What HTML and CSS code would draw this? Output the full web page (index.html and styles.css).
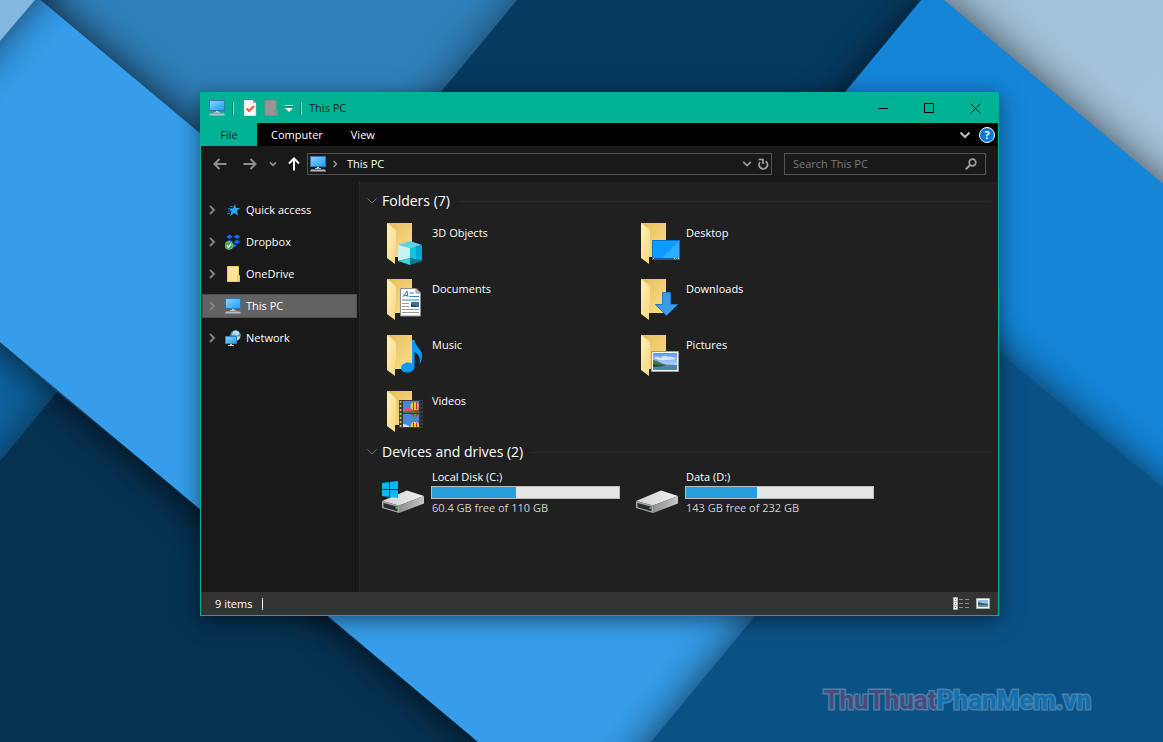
FILE: index.html
```html
<!DOCTYPE html>
<html lang="en">
<head>
  <meta charset="UTF-8" />
  <meta name="viewport" content="width=device-width, initial-scale=1.0" />
  <title>This PC</title>
  <link rel="stylesheet" href="styles.css">
</head>
<body>
  <!-- wallpaper -->
  <svg class="wallpaper" viewBox="0 0 1163 742" preserveAspectRatio="xMidYMid slice" aria-hidden="true">
    <defs>
      <filter id="soft" x="-20%" y="-20%" width="140%" height="140%"><feGaussianBlur stdDeviation="20" /></filter>
      <linearGradient id="lightCorner" x1="0" y1="0" x2="1" y2="1"><stop offset="0" stop-color="#9fbfd6" /><stop offset="1" stop-color="#a9c6de" /></linearGradient>
    </defs>
    <rect width="1163" height="742" fill="#2f80ba" />
    <path d="M575 -70L100 504H1163V-70z" fill="#000" opacity=".5" filter="url(#soft)" />
    <path d="M517 0L100 504H1163V0z" fill="#063a60" />
    <path d="M860 -70H1300V320H1200z" fill="url(#lightCorner)" />
    <path d="M932 -10L500 510L1300 1180V300z" fill="#000" opacity=".65" filter="url(#soft)" />
    <path d="M921 0L500 510L1163 1060V184L944 0z" fill="#1485d7" />
    <path d="M-60 292L0 342L57 392L-60 533z" fill="#0e629e" />
    <path d="M57 392L-60 533V900H700L400 670z" fill="#000" opacity=".5" filter="url(#soft)" />
    <path d="M57 392L0 461V742H700L400 670z" fill="#063151" />
    <path d="M-60 -85L800 636V1010L-60 292z" fill="#000" opacity=".78" filter="url(#soft)" />
    <path d="M0 -34L880 702L760 978L0 342z" fill="#359de9" />
    <path d="M-60 113L92 -68H-60z" fill="#000" opacity=".6" filter="url(#soft)" />
    <path d="M0 0H35L0 41z" fill="#82b7df" />
    <path d="M940 304L1263 572V862H551L872 475z" fill="#000" opacity=".65" filter="url(#soft)" />
    <path d="M920 287L1163 488V742H651L880 465z" fill="#0a5286" />
  </svg>

  <!-- shared icons -->
  <svg class="sprite" aria-hidden="true">
    <defs>
      <linearGradient id="screen" x1="0" y1="0" x2="1" y2="1"><stop offset="0" stop-color="#8cd3ff" /><stop offset="1" stop-color="#1b9df5" /></linearGradient>
      <linearGradient id="folderBack" x1="0" y1="0" x2="1" y2="1"><stop offset="0" stop-color="#e8bd5b" /><stop offset="1" stop-color="#fbe08c" /></linearGradient>
      <linearGradient id="folderFlap" x1="0" y1="0" x2="1" y2="1"><stop offset="0" stop-color="#fff0bd" /><stop offset="1" stop-color="#f8d880" /></linearGradient>
      <linearGradient id="driveTop" x1="0" y1="0" x2="1" y2="0"><stop offset="0" stop-color="#d2d2d2" /><stop offset="1" stop-color="#efeff0" /></linearGradient>
      <linearGradient id="driveSide" x1="0" y1="0" x2="1" y2="0"><stop offset="0" stop-color="#8f8f8f" /><stop offset="1" stop-color="#c6c6c6" /></linearGradient>
      <linearGradient id="sky" x1="0" y1="0" x2="0" y2="1"><stop offset="0" stop-color="#5b97ee" /><stop offset="1" stop-color="#dceefc" /></linearGradient>
    </defs>
    <symbol id="pc" viewBox="0 0 16 16">
      <rect x=".5" y=".5" width="15" height="10" fill="url(#screen)" stroke="#2f78b0" />
      <path d="M7 11h2v1.500H7z" fill="#e3eef5" />
      <path d="M5 12h6v1H5z" fill="#a9bac6" />
      <path d="M1 13.500h14l1 2H0z" fill="#b3bfd0" />
    </symbol>
    <symbol id="folder" viewBox="0 0 48 48">
      <path d="M7 3h25v20l2 2v12H9z" fill="url(#folderBack)" />
      <path d="M7 3l9 7v18l-1 2v14L7 38z" fill="url(#folderFlap)" />
    </symbol>
    <symbol id="drive" viewBox="0 0 48 48">
      <path d="M2 32L27 21.500 44 27 19 36.500z" fill="url(#driveTop)" />
      <path d="M19 36.500L44 27v7.500L19 44z" fill="url(#driveSide)" />
      <path d="M2 32l17 4.500V44L2 39z" fill="#a5a5a5" />
      <path d="M3.500 34l14 3.700v4.600L3.500 38.300z" fill="#2b2b2b" />
      <path d="M15.500 38h2v2h-2z" fill="#35d04a" />
    </symbol>
    <symbol id="arrow-right" viewBox="0 0 8 10"><path d="M2 1l4 4-4 4" fill="none" stroke="currentColor" stroke-width="1.800" /></symbol>
    <symbol id="arrow-down" viewBox="0 0 12 8"><path d="M1.500 1.500L6 6l4.500-4.500" fill="none" stroke="currentColor" stroke-width="2" /></symbol>
    <symbol id="landscape" viewBox="0 0 28 21">
      <path d="M.5.500h27v20H.5z" fill="#fff" stroke="#9b9b9b" />
      <path d="M2 2h24v17H2z" fill="url(#sky)" />
      <path d="M3 7q3-3 6 0 5-4 8-1 5-1 8 2-5 1-10 1-7 1-12-2z" fill="#eaf4ff" opacity=".8" />
      <path d="M2 9q4 0 7 2.500t17 2.500v1H2z" fill="#3f7a52" />
      <path d="M2 14h24v5H2z" fill="#4f85a6" />
      <path d="M2 13q8 1 13 2l-13 1z" fill="#235038" />
    </symbol>
  </svg>

  <main class="window">
    <header class="titlebar">
      <div class="quick-bar">
        <svg class="icon-16" aria-hidden="true"><use href="#pc" /></svg>
        <span class="divider"></span>
        <button aria-label="Properties"><svg width="14" height="16" viewBox="0 0 14 16">
          <path d="M1 0h9l3 3v13H1z" fill="#fafafa" stroke="#9aa" stroke-width=".5" />
          <path d="M10 0v3h3z" fill="#9a9a9a" />
          <path d="M3.500 8.500L6 11l5-5" fill="none" stroke="#f0562b" stroke-width="1.800" />
        </svg></button>
        <button aria-label="New folder"><svg width="14" height="16" viewBox="0 0 14 16">
          <path d="M1 .5h11v10h1V15.500H1z" fill="#979797" stroke="#898989" />
          <path d="M11 10.500v5" stroke="#858585" />
        </svg></button>
        <button aria-label="Customize"><svg width="8" height="7" viewBox="0 0 8 7">
          <path d="M0 0h8v1H0zM0 3h8L4 7z" fill="#fff" />
          <path d="M0 1h8v1H0z" fill="#067a67" />
        </svg></button>
        <span class="divider"></span>
      </div>
      <h1>This PC</h1>
      <div class="controls">
        <button aria-label="Minimize"><svg width="11" height="11" viewBox="0 0 11 11"><path d="M0 5.500h10" stroke="#000" /></svg></button>
        <button aria-label="Maximize"><svg width="11" height="11" viewBox="0 0 11 11"><path d="M.5.500h9v9h-9z" fill="none" stroke="#000" /></svg></button>
        <button aria-label="Close"><svg width="11" height="11" viewBox="0 0 11 11"><path d="M.5.500l10 10M10.500.500l-10 10" stroke="#000" /></svg></button>
      </div>
    </header>

    <div class="ribbon">
      <button class="tab active">File</button>
      <button class="tab">Computer</button>
      <button class="tab">View</button>
      <div class="ribbon-tools">
        <button aria-label="Expand ribbon"><svg width="12" height="8"><use href="#arrow-down" /></svg></button>
        <button class="help" aria-label="Help">?</button>
      </div>
    </div>

    <div class="navbar">
      <div class="history">
        <button aria-label="Back"><svg width="14" height="12" viewBox="0 0 14 12"><path d="M13.500 6H2M6.500 1L1.500 6l5 5" fill="none" stroke="currentColor" stroke-width="2" /></svg></button>
        <button aria-label="Forward"><svg width="14" height="12" viewBox="0 0 14 12"><path d="M.5 6H12M7.500 1l5 5-5 5" fill="none" stroke="currentColor" stroke-width="2" /></svg></button>
        <button class="recent" aria-label="Recent locations"><svg width="8" height="6" viewBox="0 0 12 8"><path d="M1.500 1.500L6 6l4.500-4.500" fill="none" stroke="currentColor" stroke-width="2.500" /></svg></button>
        <button class="up" aria-label="Up"><svg width="12" height="14" viewBox="0 0 12 14"><path d="M6 13.500V2M1 6.500l5-5 5 5" fill="none" stroke="currentColor" stroke-width="2" /></svg></button>
      </div>
      <div class="address">
        <svg class="icon-16" aria-hidden="true"><use href="#pc" /></svg>
        <svg class="crumb" width="6" height="8" aria-hidden="true"><use href="#arrow-right" /></svg>
        <a href="#">This PC</a>
        <button aria-label="Previous locations"><svg width="10" height="8"><use href="#arrow-down" /></svg></button>
        <button aria-label="Refresh"><svg width="12" height="12" viewBox="0 0 12 12">
          <path d="M8.700 3.200A4.200 4.200 0 1 1 3 4" fill="none" stroke="currentColor" stroke-width="1.700" />
          <path d="M1.500 1.500h4.500v4.500" fill="none" stroke="currentColor" stroke-width="1.700" />
        </svg></button>
      </div>
      <form class="search">
        <input type="text" placeholder="Search This PC" aria-label="Search This PC" />
        <button type="button" aria-label="Search"><svg width="12" height="12" viewBox="0 0 12 12">
          <circle cx="7.500" cy="4.500" r="3.300" fill="none" stroke="currentColor" stroke-width="1.700" />
          <path d="M5 7L.8 11.200" stroke="currentColor" stroke-width="2" />
        </svg></button>
      </form>
    </div>

    <div class="panes">
      <nav class="sidebar">
        <a href="#"><svg class="chev" width="8" height="10"><use href="#arrow-right" /></svg>
          <svg class="icon-16" viewBox="0 0 16 16">
            <path d="M10 2l1 4h4l-3 2.800L13 13.500 9.300 11 5 14l1.500-4.700L4 6.500h4z" fill="#2aa5f2" />
            <path d="M5 4.500h3M3 9h3M2 11.500h3M3 6.500h2" stroke="#1480c4" />
          </svg>Quick access</a>
        <a href="#"><svg class="chev" width="8" height="10"><use href="#arrow-right" /></svg>
          <svg class="icon-16" viewBox="0 0 16 16">
            <path d="M4.500 .5L8 2.700 4.500 5 1 2.700zM12 .5l3.500 2.200L12 5 8.500 2.700zM4.500 5.800L8 8 4.500 10 1 8zM12 5.800L15.500 8 12 10 8.500 8zM8.500 9.500l3.500 2-3.500 2.300L5 11.500z" fill="#0a6cff" />
            <circle cx="4" cy="11.500" r="4" fill="#46a845" stroke="#9bd694" stroke-width=".6" />
            <path d="M2 11.500l1.500 1.700L6 9.800" fill="none" stroke="#fff" stroke-width="1.300" />
          </svg>Dropbox</a>
        <a href="#"><svg class="chev" width="8" height="10"><use href="#arrow-right" /></svg>
          <svg class="icon-16" viewBox="0 0 16 16">
            <path d="M2.500 .5h11v9h1v6h-12z" fill="#ffe495" stroke="#f2c95d" />
            <path d="M12.500 9.500v6" stroke="#e8bd4f" />
          </svg>OneDrive</a>
        <a href="#" class="selected"><svg class="chev" width="8" height="10"><use href="#arrow-right" /></svg>
          <svg class="icon-16"><use href="#pc" /></svg>This PC</a>
        <a href="#"><svg class="chev" width="8" height="10"><use href="#arrow-right" /></svg>
          <svg class="icon-16" viewBox="0 0 16 16">
            <circle cx="10.500" cy="5.500" r="5.300" fill="#4d93b8" />
            <path d="M8 1.500q3-2 5.500 0l1 3-3 1-2.500-1-2 1zM12 7l3-1q0 3-3 4.500z" fill="#b9dfec" />
            <path d="M.5 6.500h11v7H.5z" fill="url(#screen)" stroke="#2f84bd" />
            <path d="M5 14h2v1h2v1H3v-1h2z" fill="#bccbd6" />
          </svg>Network</a>
      </nav>

      <section class="content">
        <h2><svg class="group-chev" width="10" height="6" viewBox="0 0 10 6"><path d="M.5.500L5 5 9.500.500" fill="none" stroke="currentColor" /></svg>Folders (7)</h2>
        <div class="grid">
          <div class="item">
            <svg class="icon-48" viewBox="0 0 48 48">
              <use href="#folder" />
              <path d="M18 25l12-4 12 4-12 3.500z" fill="#5fd3e6" />
              <path d="M18 25l12 3.500v9.500l-12 3z" fill="#c9f2f5" />
              <path d="M30 28.500L42 25v16l-12-3z" fill="#00a5dc" />
              <path d="M30 28.500L36 27v12.500L30 38z" fill="#18bfe0" />
              <path d="M18 41l12-3v7z" fill="#3fd4dc" />
              <path d="M30 38l12 3-12 4z" fill="#077a94" />
            </svg>
            <span class="label">3D Objects</span>
          </div>
          <div class="item">
            <svg class="icon-48" viewBox="0 0 48 48">
              <use href="#folder" />
              <path d="M18.500 20.500h27v19h-27z" fill="#0e9bff" stroke="#0874c8" />
              <path d="M28 38L45 21v17z" fill="#2eacff" />
              <path d="M19 38h26v1.500H19z" fill="#075c9d" />
              <path d="M19 38h1v1h-1zM40 38h1v1h-1zM42 38h1v1h-1zM44 38h1v1h-1z" fill="#fff" />
            </svg>
            <span class="label">Desktop</span>
          </div>
          <div class="item">
            <svg class="icon-48" viewBox="0 0 48 48">
              <use href="#folder" />
              <path d="M20.500 12.500H36l4.500 4.500v23h-20z" fill="#fff" stroke="#8e8e8e" />
              <path d="M36 12.500V17h4.500z" fill="#ccc" stroke="#8e8e8e" />
              <path d="M23 21l4-6 1 6M24 19.500h4M29.500 17H34M29.500 20.500H39M22 24h17" fill="none" stroke="#2286cc" />
              <path d="M22 27.500h7M22 30.500h7M22 33.500h17M22 36.500h17" stroke="#9b9b9b" />
              <path d="M31 26h8v5h-8z" fill="#3b71a8" /><path d="M31 28l8 3h-8z" fill="#28574a" />
            </svg>
            <span class="label">Documents</span>
          </div>
          <div class="item">
            <svg class="icon-48" viewBox="0 0 48 48">
              <use href="#folder" />
              <path d="M28.500 16.500h8v12h7.200L32.500 39.500 21.300 28.500h7.200z" fill="#3b9cec" stroke="#2478c4" />
            </svg>
            <span class="label">Downloads</span>
          </div>
          <div class="item">
            <svg class="icon-48" viewBox="0 0 48 48">
              <use href="#folder" />
              <path d="M32 8h2.500c1 7 7.500 9 7.500 16 0 4-1.500 7-2.500 8 1-6 0-9-5-12v15c0 3-3 5.500-7.500 5.500-3.500 0-6-1.500-6-4.500s3-5.500 7-5.500c1.500 0 3 .3 4 1z" fill="#0a9bfa" />
            </svg>
            <span class="label">Music</span>
          </div>
          <div class="item">
            <svg class="icon-48" viewBox="0 0 48 48">
              <use href="#folder" />
              <use href="#landscape" x="17" y="19" width="28" height="21" />
            </svg>
            <span class="label">Pictures</span>
          </div>
          <div class="item">
            <svg class="icon-48" viewBox="0 0 48 48">
              <use href="#folder" />
              <path d="M19 12h24v28H19z" fill="#3a3a3a" />
              <path d="M20.500 13v27" stroke="#d8bf74" stroke-width="1.500" stroke-dasharray="2 2" />
              <path d="M41.500 13v27" stroke="#1c1c1c" stroke-width="1.500" stroke-dasharray="2 2" />
              <path d="M23 13h16v12H23zM23 26h16v13H23z" fill="#4b86e0" />
              <path d="M23 22l4-3 4 2 8-1v5H23z" fill="#d55389" />
              <path d="M23 24l6-1 10-1v3H23z" fill="#3b7c35" />
              <circle cx="34.500" cy="18" r="4" fill="#f3c52c" />
              <path d="M33 14h1v8h-1zM36 14h1v7h-1zM33.500 22h3v2h-3z" fill="#c72f28" />
              <path d="M31.500 26h7L35 31z" fill="#d3302d" /><path d="M34 26h2v5h-2z" fill="#36a042" />
              <path d="M30.500 39q0-5 4.500-5t4 5z" fill="#f3c52c" /><path d="M33 35h1v4h-1zM36 35h1v4h-1z" fill="#c72f28" />
              <path d="M23 36l4 1 3 2h-7z" fill="#d9e6f7" />
            </svg>
            <span class="label">Videos</span>
          </div>
        </div>

        <h2><svg class="group-chev" width="10" height="6" viewBox="0 0 10 6"><path d="M.5.500L5 5 9.500.500" fill="none" stroke="currentColor" /></svg>Devices and drives (2)</h2>
        <div class="grid drives">
          <div class="item">
            <svg class="icon-48" viewBox="0 0 48 48">
              <use href="#drive" />
              <path d="M2 14l7-1v7H2zM10 13l8-1v8h-8zM2 21h7v7l-7-1zM10 21h8v8l-8-1z" fill="#00bcf2" />
            </svg>
            <div class="drive">
              <span class="label">Local Disk (C:)</span>
              <div class="bar"><div class="fill" style="width: 45%"></div></div>
              <span class="label free">60.4 GB free of 110 GB</span>
            </div>
          </div>
          <div class="item">
            <svg class="icon-48"><use href="#drive" /></svg>
            <div class="drive">
              <span class="label">Data (D:)</span>
              <div class="bar"><div class="fill" style="width: 38%"></div></div>
              <span class="label free">143 GB free of 232 GB</span>
            </div>
          </div>
        </div>
      </section>
    </div>

    <footer class="statusbar">
      <span class="count">9 items</span>
      <div class="views">
        <button aria-label="Details view"><svg width="16" height="13" viewBox="0 0 16 13">
          <path d="M.5.500h4v12h-4z" fill="#fff" stroke="#aaa" />
          <path d="M0 4.500h5M0 8.500h5" stroke="#aaa" />
          <path d="M2 2h1v1H2z" fill="#444" /><path d="M2 6h1v1H2z" fill="#2286cc" /><path d="M2 10h1v1H2z" fill="#c22" />
          <path d="M6 2.500h4M12 2.500h4M6 6.500h4M12 6.500h4M6 10.500h4M12 10.500h4" stroke="#8b8b8b" />
        </svg></button>
        <button aria-label="Large icons view"><svg width="14" height="11" viewBox="0 0 14 11">
          <path d="M.5.500h13v10H.5z" fill="#fff" stroke="#aaa" />
          <path d="M2 2h10v7H2z" fill="#8fbdf0" />
          <path d="M2 4l4 1 6 1v1H2z" fill="#2f6650" />
          <path d="M2 7h10v2H2z" fill="#5d93ae" />
        </svg></button>
      </div>
    </footer>
  </main>

  <div class="watermark"><span>ThuThuat</span>PhanMem.vn</div>
</body>
</html>
```
FILE: styles.css
```css
* { box-sizing: border-box; margin: 0; padding: 0; }
body {
  position: relative; display: flex;
  min-height: 100vh; padding: 92px 164px 126px 200px;
  background: #0a5286; color: #fff; overflow: hidden;
  font-family: "Open Sans", "Noto Sans", sans-serif;
  font-size: 11px; line-height: 16px;
}
button {
  display: flex; align-items: center; justify-content: center;
  background: none; border: none; color: inherit;
  font: inherit; cursor: pointer;
}
a { color: inherit; text-decoration: none; }
svg { display: block; flex: none; }
.sprite { position: absolute; width: 0; height: 0; }
.wallpaper {
  position: absolute; top: 0; left: 0;
  width: 100%; height: 100%;
}
.icon-16 { width: 16px; height: 16px; }
.icon-48 { width: 48px; height: 48px; }

.window {
  position: relative; flex: 1;
  display: flex; flex-direction: column;
  border: 1px solid #00b294; background: #191919;
  box-shadow: 0 4px 20px rgba(0,0,0,0.5);
}

/* title bar */
.titlebar {
  display: flex; align-items: center;
  height: 30px; padding-left: 8px;
  background: #00b294; color: #06231e;
}
.quick-bar { display: flex; align-items: center; gap: 7px; }
.quick-bar .divider {
  width: 2px; height: 13px; margin-right: 2px;
  border-left: 1px solid #0b7f6c; border-right: 1px solid #7fd9c9;
}
.quick-bar .divider:last-child { margin-right: 0; }
.titlebar h1 { margin-left: 7px; font-size: 11px; font-weight: 400; }
.controls { display: flex; margin-left: auto; }
.controls button { width: 46px; height: 30px; }

/* ribbon */
.ribbon { display: flex; height: 23px; background: #000; }
.tab { padding: 0 14px; }
.tab.active { width: 56px; background: #00b294; color: #06231e; }
.ribbon-tools {
  display: flex; align-items: center; gap: 8px;
  margin-left: auto; padding-right: 3px; color: #bdbdbd;
}
.help {
  width: 16px; height: 16px;
  border: 1px solid #fff; border-radius: 50%;
  background: #0d78d7; color: #fff; font-weight: 700;
}

/* navigation */
.navbar {
  display: flex; align-items: center;
  height: 36px; padding-right: 12px;
}
.history { display: flex; width: 106px; padding-left: 4px; color: #8f8f8f; }
.history button { width: 30px; height: 22px; }
.history .recent { width: 16px; }
.history .up { width: 26px; color: #fff; }
.address {
  display: flex; align-items: center; flex: 1;
  height: 22px; padding: 0 0 0 2px; margin-right: 12px;
  border: 1px solid #535353; color: #a0a0a0;
}
.address .crumb { margin: 0 9px 0 6px; }
.address a { flex: 1; color: #fff; font-size: 11px; }
.address button { width: 16px; height: 20px; }
.search {
  display: flex; align-items: center;
  width: 202px; height: 22px; padding: 0 8px;
  border: 1px solid #535353; color: #a0a0a0;
}
.search input {
  flex: 1; min-width: 0; border: none; outline: none;
  background: none; color: #fff; font: inherit;
}
.search input::placeholder { color: #7a7a7a; opacity: 1; }

/* panes */
.panes { display: flex; flex: 1; }
.sidebar {
  display: flex; flex-direction: column; gap: 8px;
  width: 159px; padding: 16px 2px 0 1px;
  border-right: 1px solid #2b2b2b;
}
.sidebar a {
  display: flex; align-items: center;
  height: 24px; padding-left: 5px;
  border: 1px solid transparent;
}
.sidebar .chev { margin-right: 9px; color: #868686; }
.sidebar .icon-16 { margin-right: 5px; }
.sidebar .selected { background: #626262; border-color: #505050; }
.content { flex: 1; padding: 7px 7px 0 7px; background: #202020; }
.content h2 {
  display: flex; align-items: center; height: 24px;
  font-size: 14px; font-weight: 400;
}
.content h2::after {
  content: ""; flex: 1; height: 1px;
  margin-left: 8px; background: #2b2b2b;
}
.group-chev { margin-right: 5px; color: #777; }
.grid {
  display: grid; grid-template-columns: repeat(auto-fill, 254px);
  margin: 3px 0 0 13px;
}
.drives { margin-top: 1px; }
.item { display: flex; gap: 3px; height: 56px; padding-top: 4px; }
.label { display: block; padding: 5px 0 0 1px; }
.drive { width: 189px; }
.drive .label { padding-top: 0; }
.drive .free { color: #d0d0d0; }
.bar {
  height: 13px; margin: 1px 0;
  border: 1px solid #bcbcbc; background: #e6e6e6;
}
.fill { height: 100%; background: #26a0da; }

/* status bar */
.statusbar {
  display: flex; align-items: center; justify-content: space-between;
  height: 23px; padding: 0 8px 0 14px; background: #333;
}
.count { padding-right: 10px; line-height: 12px; border-right: 1px solid #fff; }
.views { display: flex; gap: 7px; }

.watermark {
  position: absolute; right: 72px; bottom: 24px;
  color: #0f6fb0; font: 700 26px/36px "Roboto", sans-serif;
  -webkit-text-stroke: 3px #4a80a8; paint-order: stroke fill;
}
.watermark span { color: #494a7a; }
@media (max-width: 800px) {
  body { padding: 40px 20px 80px; }
}
```
